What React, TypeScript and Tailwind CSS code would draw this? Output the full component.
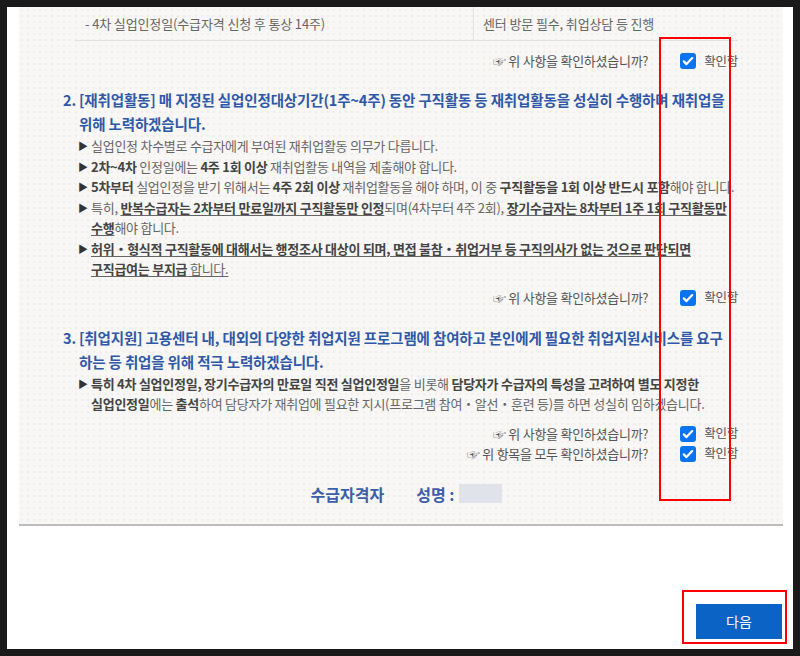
import type { ReactNode } from "react";

const FONT = "font-['Noto_Sans_CJK_KR',sans-serif]";

function CheckBox() {
  return (
    <span className="flex size-4 items-center justify-center rounded-[3px] bg-[#0a74f0]">
      <svg viewBox="0 0 16 16" className="size-4" aria-hidden="true">
        <path d="M3.8 8.4l2.7 2.7 5.7-6" fill="none" stroke="#fff" strokeWidth="2.2" strokeLinecap="round" strokeLinejoin="round" />
      </svg>
    </span>
  );
}

function ConfirmRow({ question }: { question: string }) {
  return (
    <div className="flex h-5 items-center justify-end text-[13px] tracking-[-0.02em] text-[#555]">
      <span>☞ {question}</span>
      <span className="ml-8">
        <CheckBox />
      </span>
      <span className="ml-2 text-[12.5px]">확인함</span>
    </div>
  );
}

function Title({ num, children }: { num: string; children: ReactNode }) {
  return (
    <h3 className="flex pr-[6px] text-[14.5px] leading-6 font-bold tracking-[-0.01em] text-[#2f58a8]">
      <span className="w-4 shrink-0">{num}</span>
      <span>{children}</span>
    </h3>
  );
}

function Bullets({ items }: { items: ReactNode[] }) {
  return (
    <ul className="ml-[15px] text-[13px] leading-[20.5px] tracking-[-0.02em] break-keep text-[#666]">
      {items.map((item, i) => (
        <li key={i} className="flex">
          <span className="w-[13px] shrink-0 text-[10px] text-[#333]">▶</span>
          <span>{item}</span>
        </li>
      ))}
    </ul>
  );
}

const B = ({ children }: { children: ReactNode }) => <b className="font-bold text-[#444]">{children}</b>;
const U = ({ children }: { children: ReactNode }) => <span className="underline underline-offset-2">{children}</span>;

const activityItems: ReactNode[] = [
  "실업인정 차수별로 수급자에게 부여된 재취업활동 의무가 다릅니다.",
  <>
    <B>2차~4차</B> 인정일에는 <B>4주 1회 이상</B> 재취업활동 내역을 제출해야 합니다.
  </>,
  <>
    <B>5차부터</B> 실업인정을 받기 위해서는 <B>4주 2회 이상</B> 재취업활동을 해야 하며, 이 중 <B>구직활동을 1회 이상 반드시 포함</B>해야 합니다.
  </>,
  <>
    특히, <U><B>반복수급자는 2차부터 만료일까지 구직활동만 인정</B></U>되며(4차부터 4주 2회), <U><B>장기수급자는 8차부터 1주 1회 구직활동만 수행</B></U>해야 합니다.
  </>,
  <U>
    <B>허위・형식적 구직활동에 대해서는 행정조사 대상이 되며, 면접 불참・취업거부 등 구직의사가 없는 것으로 판단되면 구직급여는 부지급</B> 합니다.
  </U>,
];

const supportItems: ReactNode[] = [
  <>
    <B>특히 4차 실업인정일, 장기수급자의 만료일 직전 실업인정일</B>을 비롯해 <B>담당자가 수급자의 특성을 고려하여 별도 지정한 실업인정일</B>에는 <B>출석</B>하여 담당자가 재취업에 필요한 지시(프로그램 참여・알선・훈련 등)를 하면 성실히 임하겠습니다.
  </>,
];

export default function App() {
  return (
    <div className={`relative h-[656px] w-[800px] overflow-hidden bg-[#1a1a1a] p-[7px] ${FONT}`}>
      <div className="flex h-full flex-col bg-white pr-[10px] pl-3">
        <section className="border-b-2 border-[#bdbdbd] bg-[#f8f7f5] bg-[radial-gradient(#f0eeea_1px,transparent_1px)] bg-[length:6px_6px] pr-[45px] pb-5 pl-[44px]">
          <div className="ml-3 grid h-[34px] grid-cols-[398px_1fr] border-b border-[#e2e2e2] text-[13px] tracking-[-0.01em] text-[#666]">
            <div className="flex items-center pl-[10px]">- 4차 실업인정일(수급자격 신청 후 통상 14주)</div>
            <div className="flex items-center border-l border-[#e2e2e2] pl-[9px]">센터 방문 필수, 취업상담 등 진행</div>
          </div>

          <div className="mt-[10px]">
            <ConfirmRow question="위 사항을 확인하셨습니까?" />
          </div>

          <div className="mt-[17px]">
            <Title num="2.">
              [재취업활동] 매 지정된 실업인정대상기간(1주~4주) 동안 구직활동 등 재취업활동을 성실히 수행하며 재취업을 위해 노력하겠습니다.
            </Title>
            <Bullets items={activityItems} />
          </div>

          <div className="mt-2">
            <ConfirmRow question="위 사항을 확인하셨습니까?" />
          </div>

          <div className="mt-[18px]">
            <Title num="3.">
              [취업지원] 고용센터 내, 대외의 다양한 취업지원 프로그램에 참여하고 본인에게 필요한 취업지원서비스를 요구하는 등 취업을 위해 적극 노력하겠습니다.
            </Title>
            <Bullets items={supportItems} />
          </div>

          <div className="mt-[9px]">
            <ConfirmRow question="위 사항을 확인하셨습니까?" />
            <ConfirmRow question="위 항목을 모두 확인하셨습니까?" />
          </div>

          <div className="mt-5 flex h-5 items-center justify-center pl-3 text-[16px] font-bold text-[#3d5ea8]">
            <span>수급자격자</span>
            <span className="ml-8">성명 :</span>
            <span className="ml-[5px] h-[19px] w-[43px] bg-[#e1e3ea]" />
          </div>
        </section>

        <div className="mt-[78px] flex justify-end pr-px">
          <button type="button" className="h-[35px] w-[86px] bg-[#0b63c5] text-[14px] text-white">
            다음
          </button>
        </div>
      </div>

      <div className="pointer-events-none absolute top-[37px] left-[659px] h-[464px] w-[72px] border-2 border-[#f00]" />
      <div className="pointer-events-none absolute top-[590px] left-[682px] h-[54px] w-[105px] border-2 border-[#f00]" />
    </div>
  );
}
